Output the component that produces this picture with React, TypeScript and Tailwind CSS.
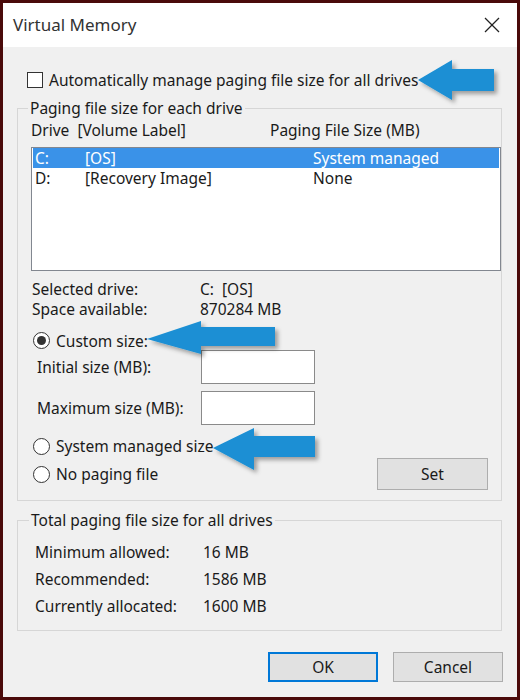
import React from "react";

const font = { fontFamily: '"Noto Sans", "Open Sans", Arial, sans-serif' };

function Radio({ checked, label }: { checked?: boolean; label: string }) {
  return (
    <div className="flex items-center gap-[6px] pl-[15px]">
      <span className="flex h-[17px] w-[17px] items-center justify-center rounded-full border border-[#333] bg-white">
        {checked && <span className="h-[9px] w-[9px] rounded-full bg-[#333]" />}
      </span>
      <span>{label}</span>
    </div>
  );
}

function Arrows() {
  return (
    <svg className="pointer-events-none absolute left-0 top-0" width="520" height="700">
      <defs>
        <filter id="sh" x="-20%" y="-30%" width="150%" height="180%">
          <feDropShadow dx="3" dy="3" stdDeviation="2" floodColor="#000" floodOpacity="0.35" />
        </filter>
      </defs>
      <g fill="#1a8fd4" filter="url(#sh)">
        <polygon points="418,80 452,60 452,69 494,69 494,91 452,91 452,100" />
        <polygon points="147,339 201,321 201,327 275,327 275,346 201,346 201,354" />
        <polygon points="213,448 254,428 254,436 315,436 315,457 254,457 254,470" />
      </g>
    </svg>
  );
}

export default function App() {
  return (
    <div className="relative h-[700px] w-[520px] bg-[#4a0a0a] p-[3px] text-[15.5px] leading-[20px] text-[#1a1a1a]" style={font}>
      <div className="flex h-full flex-col bg-[#f0f0f0]">
        {/* title bar */}
        <div className="flex h-[44px] shrink-0 items-center justify-between bg-white pl-[10px] pr-[17px]">
          <span className="text-[17px] text-[#333]">Virtual Memory</span>
          <svg width="16" height="16" viewBox="0 0 16 16" stroke="#222" strokeWidth="1.2">
            <line x1="1" y1="1" x2="15" y2="15" />
            <line x1="15" y1="1" x2="1" y2="15" />
          </svg>
        </div>

        <div className="flex flex-col pl-[14px] pr-[15px]">
          {/* auto manage */}
          <div className="mt-[23px] flex h-[20px] items-center gap-[6px] pl-[10px]">
            <span className="h-[16px] w-[16px] border border-[#333] bg-white" />
            <span>Automatically manage paging file size for all drives</span>
          </div>

          {/* per-drive group */}
          <fieldset className="mt-[8px] border border-[#d6d6d6] pb-[9px]">
            <legend className="ml-[10px] px-[2px]">Paging file size for each drive</legend>
            <div className="mt-[2px] flex h-[20px] items-center pl-[13px]">
              <span className="w-[239px]">Drive&nbsp; [Volume Label]</span>
              <span>Paging File Size (MB)</span>
            </div>
            <div className="ml-[13px] mt-[7px] h-[124px] w-[470px] border border-[#828790] bg-white">
              <div className="mx-[1px] flex h-[20px] items-center bg-[#3a92e8] pl-[2px] text-white">
                <span className="w-[50px]">C:</span>
                <span className="w-[228px]">[OS]</span>
                <span>System managed</span>
              </div>
              <div className="mx-[1px] flex h-[20px] items-center pl-[2px]">
                <span className="w-[50px]">D:</span>
                <span className="w-[228px]">[Recovery Image]</span>
                <span>None</span>
              </div>
            </div>

            <div className="mt-[8px] flex h-[20px] items-center pl-[14px]">
              <span className="w-[168px]">Selected drive:</span>
              <span>C:&nbsp; [OS]</span>
            </div>
            <div className="flex h-[20px] items-center pl-[14px]">
              <span className="w-[168px]">Space available:</span>
              <span>870284 MB</span>
            </div>

            <div className="mt-[12px] flex h-[19px] items-center">
              <Radio checked label="Custom size:" />
            </div>
            <div className="flex h-[34px] items-center pl-[19px]">
              <span className="w-[164px]">Initial size (MB):</span>
              <span className="h-[34px] w-[114px] border border-[#8a8a8a] bg-white" />
            </div>
            <div className="mt-[7px] flex h-[34px] items-center pl-[19px]">
              <span className="w-[164px]">Maximum size (MB):</span>
              <span className="h-[34px] w-[114px] border border-[#8a8a8a] bg-white" />
            </div>

            <div className="mt-[11px] flex h-[20px] items-center">
              <Radio label="System managed size" />
            </div>
            <div className="mt-[1px] flex h-[34px] items-center justify-between pr-[13px]">
              <Radio label="No paging file" />
              <button className="h-[32px] w-[111px] border border-[#adadad] bg-[#e1e1e1] text-[15.5px]">Set</button>
            </div>
          </fieldset>

          {/* totals group */}
          <fieldset className="mt-[9px] border border-[#d6d6d6] pb-[14px]">
            <legend className="ml-[11px] px-[2px]">Total paging file size for all drives</legend>
            <div className="mt-[12px] flex h-[20px] items-center pl-[17px]">
              <span className="w-[168px]">Minimum allowed:</span>
              <span>16 MB</span>
            </div>
            <div className="mt-[7px] flex h-[20px] items-center pl-[17px]">
              <span className="w-[168px]">Recommended:</span>
              <span>1586 MB</span>
            </div>
            <div className="mt-[7px] flex h-[20px] items-center pl-[17px]">
              <span className="w-[168px]">Currently allocated:</span>
              <span>1600 MB</span>
            </div>
          </fieldset>

          {/* buttons */}
          <div className="mt-[21px] flex justify-end gap-[15px]">
            <button className="h-[30px] w-[110px] border-2 border-[#0078d7] bg-[#e1e1e1] text-[15.5px]">OK</button>
            <button className="mr-[-1px] h-[30px] w-[110px] border border-[#adadad] bg-[#e1e1e1] text-[15.5px]">Cancel</button>
          </div>
        </div>
      </div>
      <Arrows />
    </div>
  );
}
